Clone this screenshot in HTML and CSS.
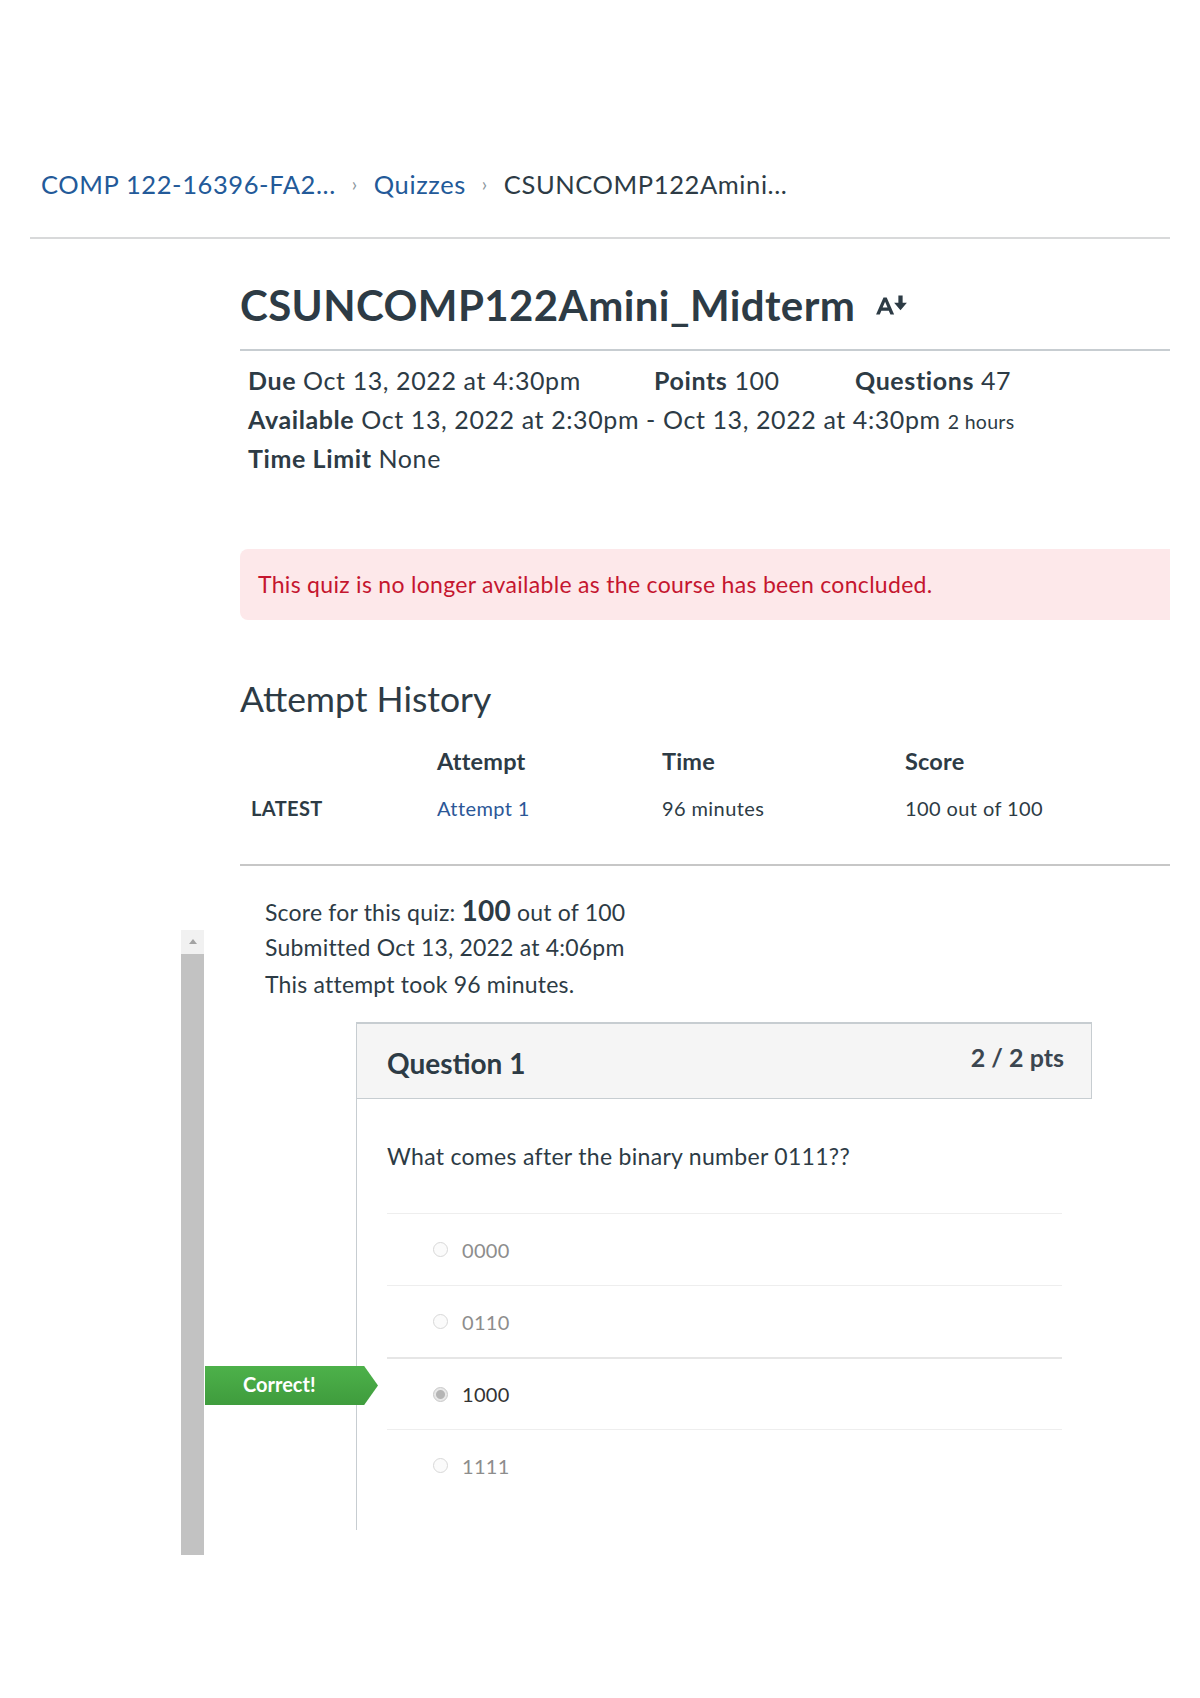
FILE: index.html
```html
<!DOCTYPE html>
<html>
<head>
<meta charset="utf-8">
<link rel="stylesheet" href="styles.css">
</head>
<body>
<nav class="crumbs">
  <a class="crumb-link" href="#">COMP 122-16396-FA2...</a>
  <span class="sep">›</span>
  <a class="crumb-link" href="#">Quizzes</a>
  <span class="sep">›</span>
  <span class="crumb-cur">CSUNCOMP122Amini...</span>
</nav>

<main class="main">
  <h1 class="title">CSUNCOMP122Amini_Midterm
    <svg class="title-icon" viewBox="0 0 32 24" width="34" height="26">
      <path d="M1 20 L8 4 L11 4 L18 20 L14.5 20 L13 16.5 L6 16.5 L4.5 20 Z M7.2 13.5 L11.8 13.5 L9.5 8 Z" fill="#2d3b45"/>
      <path d="M22 2 L26 2 L26 9 L30 9 L24 16 L18 9 L22 9 Z" fill="#2d3b45"/>
    </svg>
  </h1>

  <div class="details">
    <div class="drow">
      <span class="ditem ditem-due"><b>Due</b> Oct 13, 2022 at 4:30pm</span>
      <span class="ditem ditem-pts"><b>Points</b> 100</span>
      <span class="ditem"><b>Questions</b> 47</span>
    </div>
    <div class="drow"><span class="ditem"><b>Available</b> Oct 13, 2022 at 2:30pm - Oct 13, 2022 at 4:30pm <small>2 hours</small></span></div>
    <div class="drow"><span class="ditem"><b>Time Limit</b> None</span></div>
  </div>

  <div class="alert">This quiz is no longer available as the course has been concluded.</div>

  <h2 class="hist-title">Attempt History</h2>
  <table class="hist">
    <thead>
      <tr><th class="c1"></th><th class="c2">Attempt</th><th class="c3">Time</th><th>Score</th></tr>
    </thead>
    <tbody>
      <tr><td class="latest">LATEST</td><td><a href="#" class="att-link">Attempt 1</a></td><td>96 minutes</td><td>100 out of 100</td></tr>
    </tbody>
  </table>
</main>

<section class="results">
  <div class="scrollbar">
    <div class="sb-arrow"></div>
    <div class="sb-thumb"></div>
  </div>
  <div class="res-body">
    <div class="summary">
      <div class="sline">Score for this quiz: <strong class="big">100</strong> out of 100</div>
      <div class="sline">Submitted Oct 13, 2022 at 4:06pm</div>
      <div class="sline">This attempt took 96 minutes.</div>
    </div>
    <div class="question">
      <div class="q-head">
        <span class="q-name">Question 1</span>
        <span class="q-pts">2 / 2 pts</span>
      </div>
      <div class="q-body">
        <div class="q-text">What comes after the binary number 0111??</div>
        <div class="answers">
          <div class="ans"><span class="radio"></span><span class="ans-text">0000</span></div>
          <div class="ans"><span class="radio"></span><span class="ans-text">0110</span></div>
          <div class="ans ans-correct">
            <div class="flag">Correct!</div>
            <span class="radio radio-on"></span><span class="ans-text">1000</span>
          </div>
          <div class="ans"><span class="radio"></span><span class="ans-text">1111</span></div>
        </div>
      </div>
    </div>
  </div>
</section>
</body>
</html>
```

FILE: styles.css
```css
html, body {
  margin: 0;
  padding: 0;
  background: #ffffff;
}
body {
  font-family: Lato, "Open Sans", "Liberation Sans", sans-serif;
  color: #2d3b45;
  width: 1200px;
  height: 1698px;
  overflow: hidden;
}
a { text-decoration: none; }

.crumbs {
  margin: 0 30px;
  padding: 164px 0 33px 11px;
  height: 40px;
  line-height: 40px;
  font-size: 25.5px;
  letter-spacing: 0.6px;
  border-bottom: 2px solid #d8d9da;
  display: flex;
  align-items: center;
  gap: 16px;
}
.crumb-link { color: #235a99; }
.sep { color: #8b969e; font-size: 19px; }
.crumb-cur { color: #2d3b45; }

.main {
  margin: 0 30px 0 240px;
}
.title {
  margin: 41px 0 0 0;
  padding: 0 0 19px 0;
  height: 50px;
  line-height: 50px;
  font-size: 42px;
  letter-spacing: 0.4px;
  font-weight: 700;
  border-bottom: 2px solid #c7cdd1;
  display: flex;
  align-items: center;
  gap: 20px;
}
.title-icon { margin-top: 2px; }

.details {
  padding: 10px 0 0 8px;
  font-size: 25px;
  letter-spacing: 0.6px;
}
.drow {
  display: flex;
  height: 39px;
  line-height: 39px;
}
.ditem b { font-weight: 700; }
.ditem-due { width: 406px; }
.ditem-pts { width: 201px; }
.ditem small { font-size: 19.5px; letter-spacing: 0.3px; }

.alert {
  margin-top: 71px;
  height: 71px;
  line-height: 71px;
  padding-left: 18px;
  background: #fde8ea;
  color: #c5162f;
  font-size: 23px;
  letter-spacing: 0.3px;
  border-radius: 8px 0 0 8px;
}

.hist-title {
  margin: 59px 0 0 0;
  height: 40px;
  line-height: 40px;
  font-size: 35.5px;
  font-weight: 400;
}
.hist {
  width: 100%;
  border-collapse: collapse;
  margin-top: 24px;
  border-bottom: 2px solid #c7c7c7;
}
.hist th {
  text-align: left;
  font-size: 23.5px;
  letter-spacing: 0.2px;
  font-weight: 700;
  height: 35px;
  padding: 0;
}
.hist td {
  font-size: 20px;
  letter-spacing: 0.4px;
  height: 60px;
  padding: 0 0 26px 0;
  color: #2d3b45;
}
.hist .c1 { width: 197px; }
.hist .c2 { width: 225px; }
.hist .c3 { width: 243px; }
.hist td.latest { padding-left: 11px; font-weight: 700; }
.att-link { color: #2b5797; }

.results {
  display: flex;
  margin-left: 181px;
}
.scrollbar {
  width: 23px;
  margin-top: 64px;
  display: flex;
  flex-direction: column;
}
.sb-arrow {
  height: 24px;
  background: #f1f1f1;
  position: relative;
}
.sb-arrow::after {
  content: "";
  position: absolute;
  left: 8px;
  top: 9px;
  border-left: 4px solid transparent;
  border-right: 4px solid transparent;
  border-bottom: 5px solid #a3a3a3;
}
.sb-thumb {
  height: 601px;
  background: #c2c2c2;
}
.res-body {
  flex: 1;
}
.summary {
  padding: 26px 0 0 61px;
  font-size: 23px;
  letter-spacing: 0.2px;
}
.sline {
  height: 37px;
  line-height: 37px;
}
.big { font-size: 28px; font-weight: 700; }

.question {
  margin: 19px 0 0 152px;
  width: 736px;
}
.q-head {
  height: 74px;
  background: #f5f5f5;
  border: 1px solid #c7cdd1;
  border-width: 2px 1px 1px 1px;
  display: flex;
  justify-content: space-between;
  padding: 0 27px 0 30px;
}
.q-name {
  font-size: 28px;
  font-weight: 700;
  line-height: 78px;
}
.q-pts {
  font-size: 25px;
  font-weight: 700;
  line-height: 66px;
  color: #3b4650;
}
.q-body {
  border-left: 1px solid #c7cdd1;
  padding: 38px 30px 29px 30px;
}
.q-text {
  font-size: 23px;
  letter-spacing: 0.3px;
  height: 38px;
  line-height: 38px;
  margin-bottom: 38px;
}
.ans {
  position: relative;
  height: 71px;
  border-top: 1px solid #eeeeee;
  display: flex;
  align-items: center;
  padding-left: 46px;
  gap: 14px;
}
.ans-correct { border-top: 2px solid #e6e6e6; height: 70px; }
.radio {
  width: 15px;
  height: 15px;
  border: 1px solid #d8d8d8;
  border-radius: 50%;
  background: #fbfbfb;
  box-sizing: border-box;
}
.radio-on {
  background: radial-gradient(circle, #b5b5b5 0 4px, #e8e8e8 5px);
  border-color: #c8c8c8;
}
.ans-text {
  font-size: 20px;
  letter-spacing: 0.3px;
  color: #8d8d8d;
}
.ans-correct .ans-text { color: #333333; }

.flag {
  position: absolute;
  left: -182px;
  top: 7px;
  width: 173px;
  height: 39px;
  line-height: 37px;
  padding-left: 38px;
  box-sizing: border-box;
  color: #ffffff;
  font-size: 20px;
  font-weight: 700;
  background: linear-gradient(#4db14a, #3f9c3d);
  clip-path: polygon(0 0, 92% 0, 100% 50%, 92% 100%, 0 100%);
}
```
